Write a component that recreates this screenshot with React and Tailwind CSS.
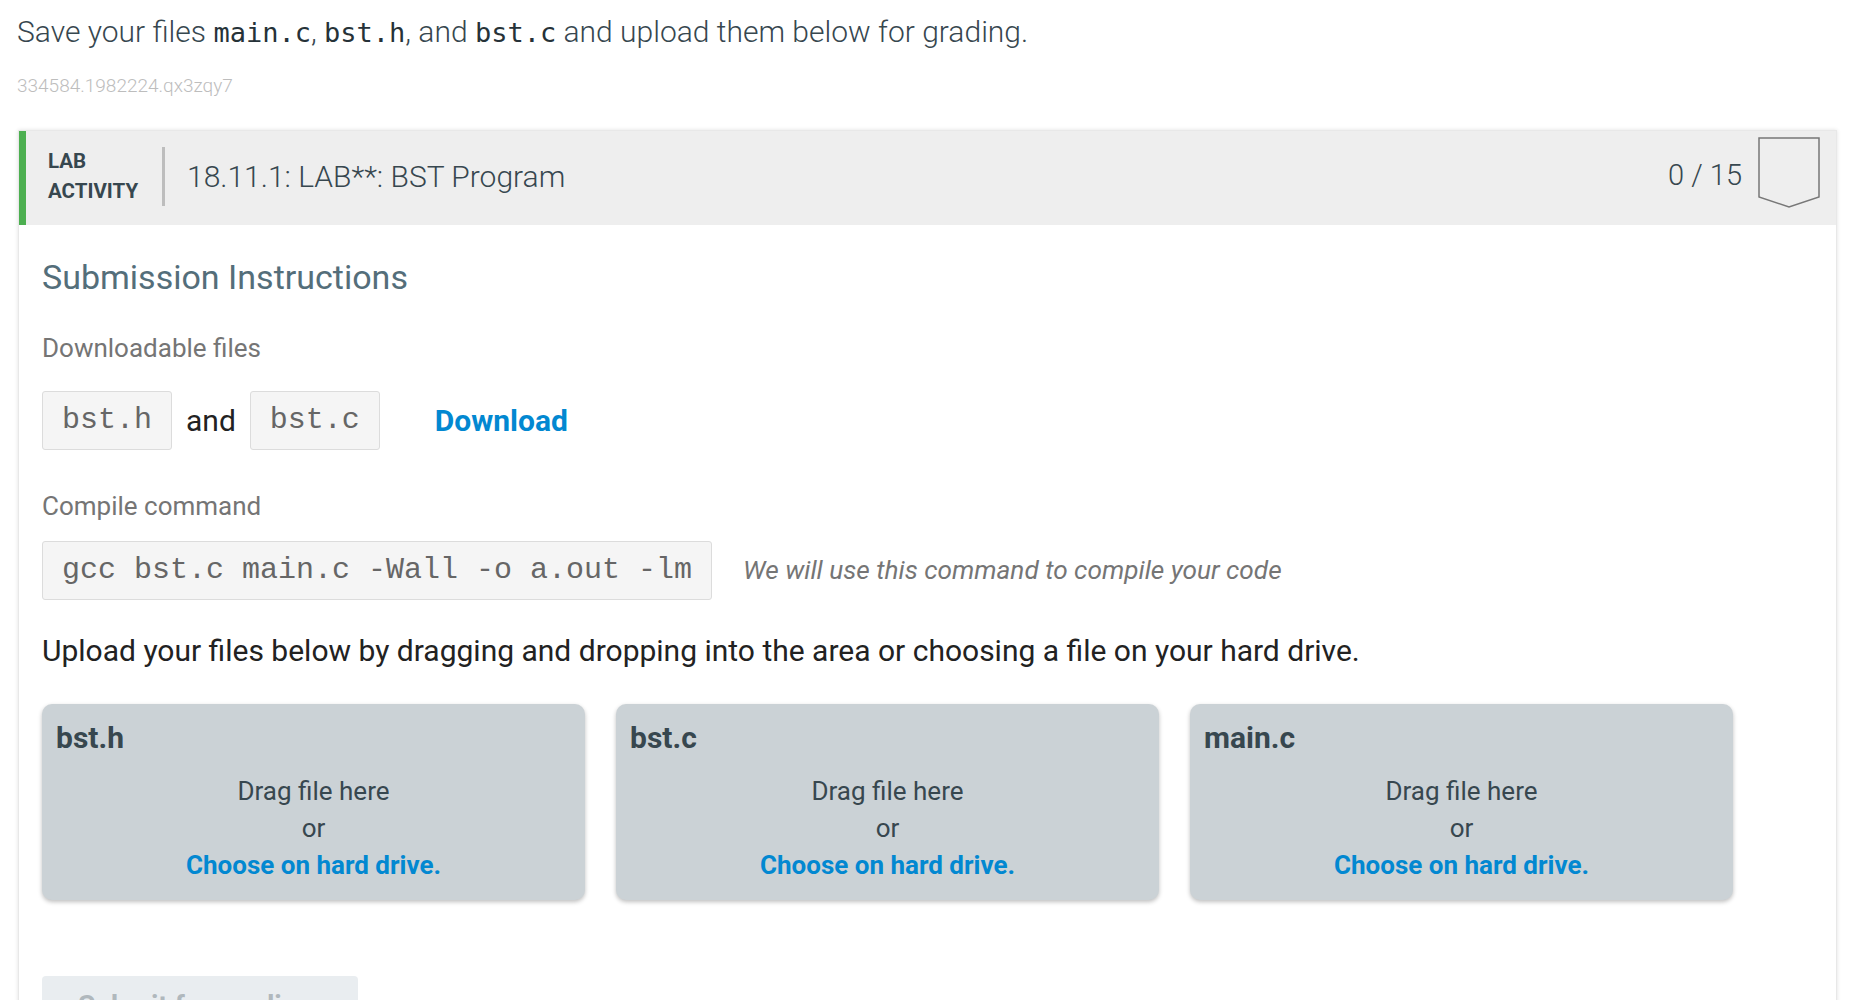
export default function App() {
  const files = ['bst.h', 'bst.c', 'main.c'];

  return (
    <div className="min-h-screen bg-white font-['Roboto',sans-serif] text-[#333]">

      {/* INTRO */}
      <div className="pl-[17px] pt-[14px]">
        <p className="text-[30px] leading-[36px] font-light text-[#37474f]">
          Save your files <code className="font-['DejaVu_Sans_Mono',monospace] text-[27px] text-[#263238]">main.c</code>,{' '}
          <code className="font-['DejaVu_Sans_Mono',monospace] text-[27px] text-[#263238]">bst.h</code>, and{' '}
          <code className="font-['DejaVu_Sans_Mono',monospace] text-[27px] text-[#263238]">bst.c</code> and upload them below for grading.
        </p>
        <p className="mt-[24px] text-[19px] leading-[22px] font-light text-[#bdbdbd]">334584.1982224.qx3zqy7</p>
      </div>

      {/* LAB CARD */}
      <div className="ml-[18px] mr-[18px] mt-[33px] border border-[#e8e8e8] shadow-[0_0_4px_rgba(0,0,0,0.12)] bg-white">

        {/* HEADER */}
        <div className="flex items-center h-[94px] pb-[4px] bg-[#eeeeee] border-l-[7px] border-[#4caf50]">
          <div className="pl-[22px] w-[136px] text-[20.5px] leading-[30px] font-bold text-[#37474f]">
            LAB<br />ACTIVITY
          </div>
          <div className="w-[3px] h-[59px] bg-[#bdbdbd]" />
          <h1 className="ml-[22px] text-[30px] font-light text-[#37474f]">18.11.1: LAB**: BST Program</h1>
          <div className="ml-auto flex items-center">
            <span className="text-[29px] font-light text-[#37474f]">0 / 15</span>
            <svg className="ml-[16px] mr-[16px] mb-[6px]" width="62" height="72" viewBox="0 0 62 72">
              <path d="M1 1 H61 V60 L31 70 L1 60 Z" fill="none" stroke="#777" strokeWidth="1.5" />
            </svg>
          </div>
        </div>

        {/* BODY */}
        <div className="pl-[23px] pr-[23px] pb-[40px]">
          <h2 className="mt-[32px] text-[34px] leading-[40px] text-[#546e7a]">Submission Instructions</h2>

          <p className="mt-[36px] text-[26px] leading-[30px] text-[#757575]">Downloadable files</p>
          <div className="mt-[28px] flex items-center">
            <span className="h-[59px] w-[130px] flex items-center justify-center bg-[#f5f5f5] border border-[#dcdcdc] rounded-[3px] font-['Liberation_Mono',monospace] text-[30px] text-[#666]">bst.h</span>
            <span className="mx-[14px] text-[30px] text-[#222]">and</span>
            <span className="h-[59px] w-[130px] flex items-center justify-center bg-[#f5f5f5] border border-[#dcdcdc] rounded-[3px] font-['Liberation_Mono',monospace] text-[30px] text-[#666]">bst.c</span>
            <a className="ml-[55px] text-[30px] font-bold text-[#0288d1]">Download</a>
          </div>

          <p className="mt-[41px] text-[26px] leading-[30px] text-[#757575]">Compile command</p>
          <div className="mt-[20px] flex items-center">
            <span className="h-[59px] px-[19px] flex items-center bg-[#f5f5f5] border border-[#dcdcdc] rounded-[3px] font-['Liberation_Mono',monospace] text-[30px] text-[#666]">gcc bst.c main.c -Wall -o a.out -lm</span>
            <span className="ml-[31px] text-[26.2px] italic text-[#757575]">We will use this command to compile your code</span>
          </div>

          <p className="mt-[33px] text-[30px] leading-[36px] text-[#222]">
            Upload your files below by dragging and dropping into the area or choosing a file on your hard drive.
          </p>

          {/* UPLOAD ZONES */}
          <div className="mt-[35px] flex gap-[31px]">
            {files.map((f) => (
              <div key={f} className="w-[543px] h-[196px] bg-[#cbd2d6] rounded-[10px] shadow-[0_2px_4px_rgba(0,0,0,0.25)] px-[14px] pt-[16px]">
                <div className="text-[30px] leading-[36px] font-bold text-[#37474f]">{f}</div>
                <div className="mt-[17px] text-center text-[26px] leading-[37px] text-[#37474f]">
                  <div>Drag file here</div>
                  <div>or</div>
                  <div className="font-bold text-[#0288d1]">Choose on hard drive.</div>
                </div>
              </div>
            ))}
          </div>

          <button className="mt-[76px] w-[316px] h-[60px] bg-[#e9edf0] rounded-[4px] text-[28px] font-bold text-[#b0b8bd] text-left pl-[36px]">
            Submit for grading
          </button>
        </div>
      </div>
    </div>
  );
}
